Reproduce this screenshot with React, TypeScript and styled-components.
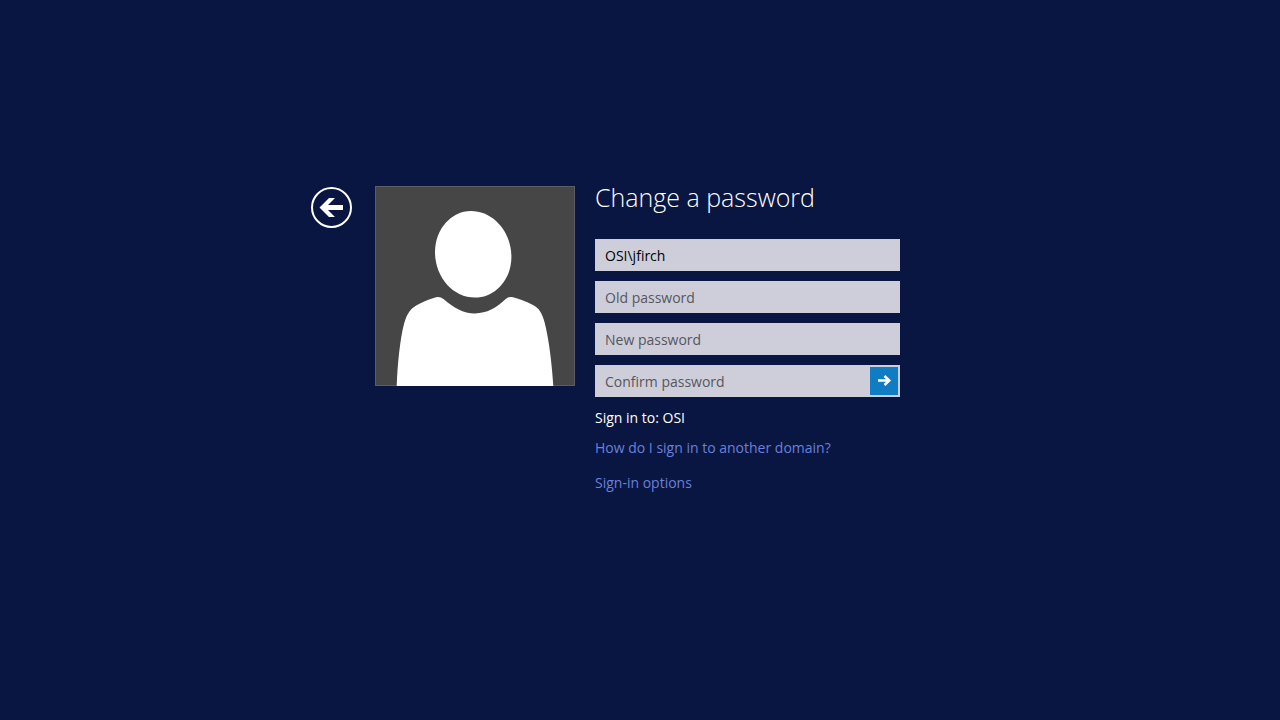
import React, { useState } from "react";
import styled, { createGlobalStyle } from "styled-components";

const GlobalStyle = createGlobalStyle`
  * { box-sizing: border-box; }
  body {
    margin: 0;
    background: #091641;
    color: #ffffff;
    font-family: "Segoe UI", "Open Sans", "Noto Sans", sans-serif;
    font-size: 14px;
    font-weight: 400;
  }
`;

const Screen = styled.main`
  display: flex;
  justify-content: center;
  align-items: flex-start;
  min-height: 100vh;
  padding: 186px 69px 40px 0;
`;

const BackButton = styled.button`
  display: flex;
  flex: none;
  margin: 0 22px 0 0;
  padding: 0;
  border: 0;
  background: none;
  color: inherit;
  cursor: pointer;
`;

const UserTile = styled.div`
  display: flex;
  flex: none;
  width: 200px;
  height: 200px;
  margin-right: 20px;
  background: #464646;
`;

const Form = styled.form`
  display: flex;
  flex-direction: column;
  width: 305px;
`;

const Title = styled.h1`
  margin: -7px 0 24px;
  font-size: 25px;
  line-height: 36px;
  font-weight: 300;
  white-space: nowrap;
`;

const Fields = styled.div`
  display: flex;
  flex-direction: column;
  gap: 10px;
`;

const Field = styled.div`
  display: flex;
  align-items: center;
  height: 32px;
  padding: 2px;
  background: #cdced9;
`;

const Input = styled.input`
  flex: 1;
  min-width: 0;
  height: 28px;
  padding: 0 8px;
  border: 0;
  outline: 0;
  background: none;
  color: #000000;
  font: inherit;
  &::placeholder { color: #56565e; opacity: 1; }
`;

const SubmitButton = styled.button`
  display: flex;
  flex: none;
  width: 28px;
  height: 28px;
  padding: 0;
  border: 0;
  background: #0f7cc4;
  color: #ffffff;
  cursor: pointer;
`;

const Domain = styled.p`
  margin: 11px 0 10px;
  line-height: 20px;
`;

const Links = styled.nav`
  display: flex;
  flex-direction: column;
  align-items: flex-start;
  gap: 15px;
`;

const Link = styled.a`
  color: #6a80dc;
  line-height: 20px;
  text-decoration: none;
  white-space: nowrap;
`;

const secrets = ["Old password", "New password"];

export default function App() {
  const [user, setUser] = useState("OSI\\jfirch");
  return (
    <>
      <GlobalStyle />
      <Screen>
        <BackButton type="button" aria-label="Back">
          <svg width="42" height="43" viewBox="0 0 42 43" aria-hidden="true">
            <circle cx="20.5" cy="21.5" r="19.5" fill="none" stroke="currentColor" strokeWidth="2" />
            <path d="M8.500 21.5 L18 12 H24 L17 19 H32 V24 H17 L24 31 H18 Z" fill="currentColor" />
          </svg>
        </BackButton>
        <UserTile>
          <svg width="200" height="200" viewBox="0 0 200 200" aria-hidden="true">
            <rect x="0.5" y="0.5" width="199" height="199" fill="none" stroke="#5b5d63" />
            <path
              fill="#ffffff"
              d="M96 25 C118.300 25 136.400 46 136.400 71 C136.400 93.400 120.100 111.600 100 111.600 C77.900 111.600 60 91.200 60 66 C60 43.400 76.100 25 96 25 Z"
            />
            <path
              fill="#ffffff"
              d="M21.700 200 C22.500 179 25 153 29 138 C32 127 36 122 43 118.500 C50 115 56 112.500 61 111.200 Q65 110.200 68.500 113 C79 122 88 127.400 100 127.400 C112 127.400 121 122 131 112.800 Q134 110.200 138 111.200 C145 113 151 115.500 158 119 C164 122 167 127 169.500 136 C174 153 177 179 178.300 200 Z"
            />
          </svg>
        </UserTile>
        <Form onSubmit={(e) => e.preventDefault()}>
          <Title>Change a password</Title>
          <Fields>
            <Field>
              <Input aria-label="User name" value={user} onChange={(e) => setUser(e.target.value)} />
            </Field>
            {secrets.map((name) => (
              <Field key={name}>
                <Input type="password" aria-label={name} placeholder={name} />
              </Field>
            ))}
            <Field>
              <Input type="password" aria-label="Confirm password" placeholder="Confirm password" />
              <SubmitButton type="submit" aria-label="Submit">
                <svg width="28" height="28" viewBox="0 0 28 28" aria-hidden="true">
                  <path d="M8 13.500 H19 M14.500 9 L19.300 13.500 L14.500 18" fill="none" stroke="currentColor" strokeWidth="2.400" />
                </svg>
              </SubmitButton>
            </Field>
          </Fields>
          <Domain>Sign in to: OSI</Domain>
          <Links>
            <Link href="#domain-help">How do I sign in to another domain?</Link>
            <Link href="#options">Sign-in options</Link>
          </Links>
        </Form>
      </Screen>
    </>
  );
}
